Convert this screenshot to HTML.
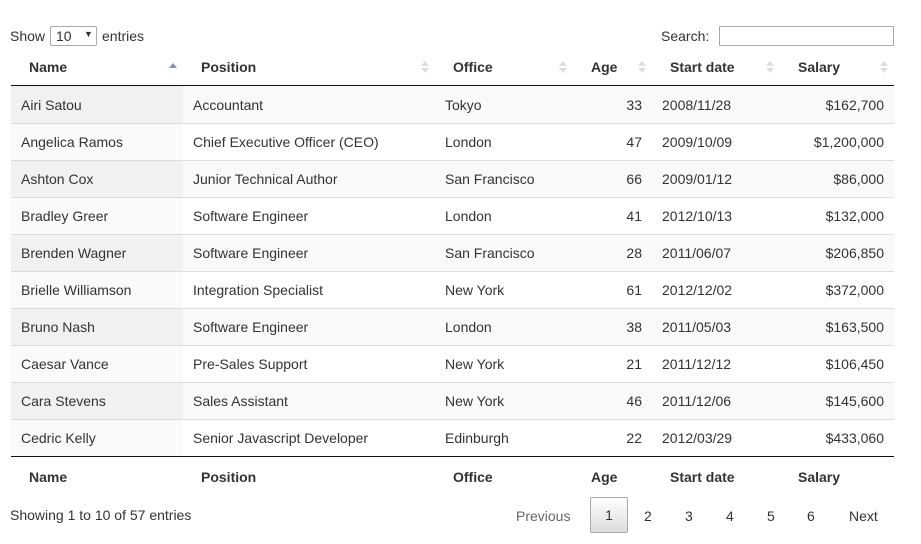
<!DOCTYPE html>
<html><head><style>
body{margin:0;background:#fff;font-family:"Liberation Sans",Arial,sans-serif;font-size:14px;color:#333;width:921px;height:544px;position:relative;overflow:hidden}
.abs{position:absolute}
table{position:absolute;left:11px;top:48px;border-collapse:collapse;table-layout:fixed;width:883px}
th{font-weight:bold;text-align:left;padding:0 18px;height:37px;position:relative}
thead th{border-bottom:1px solid #111}
tfoot th{border-top:1px solid #111;height:40px}
td{padding:0 10px;height:36px;border-top:1px solid #ddd;white-space:nowrap}
tbody tr:first-child td{border-top:none;height:37px}
tbody tr:nth-child(odd) td{background:#f9f9f9}
tbody tr:nth-child(odd) td:first-child{background:#f1f1f1}
tbody tr:nth-child(even) td:first-child{background:#fafafa}
.r{text-align:right}
.s{position:absolute;right:6px;top:12px;width:8px;height:14px}
</style></head><body>
<div class="abs" style="left:10px;top:28px">Show</div>
<div class="abs" style="left:50px;top:26px;width:45px;height:18px;border:1px solid #aaa;border-radius:2px"><span style="position:absolute;left:5px;top:1px">10</span><span style="position:absolute;left:33px;top:2px;font-size:9px">▼</span></div>
<div class="abs" style="left:102px;top:28px">entries</div>
<div class="abs" style="left:661px;top:28px">Search:</div>
<div class="abs" style="left:719px;top:26px;width:173px;height:18px;border:1px solid #aaa"></div>
<table>
<colgroup><col style="width:172px"><col style="width:252px"><col style="width:138px"><col style="width:79px"><col style="width:128px"><col style="width:114px"></colgroup>
<thead><tr>
<th>Name<svg class="s" viewBox="0 0 8 14"><path d="M0 8L4 3L8 8Z" fill="#8888dd"/></svg></th>
<th>Position<svg class="s" viewBox="0 0 8 14"><path d="M0 6L4 1L8 6ZM0 8L4 13L8 8Z" fill="#ddd"/></svg></th>
<th>Office<svg class="s" viewBox="0 0 8 14"><path d="M0 6L4 1L8 6ZM0 8L4 13L8 8Z" fill="#ddd"/></svg></th>
<th>Age<svg class="s" viewBox="0 0 8 14"><path d="M0 6L4 1L8 6ZM0 8L4 13L8 8Z" fill="#ddd"/></svg></th>
<th>Start date<svg class="s" viewBox="0 0 8 14"><path d="M0 6L4 1L8 6ZM0 8L4 13L8 8Z" fill="#ddd"/></svg></th>
<th>Salary<svg class="s" viewBox="0 0 8 14"><path d="M0 6L4 1L8 6ZM0 8L4 13L8 8Z" fill="#ddd"/></svg></th>
</tr></thead>
<tbody>
<tr><td>Airi Satou</td><td>Accountant</td><td>Tokyo</td><td class="r">33</td><td>2008/11/28</td><td class="r">$162,700</td></tr>
<tr><td>Angelica Ramos</td><td>Chief Executive Officer (CEO)</td><td>London</td><td class="r">47</td><td>2009/10/09</td><td class="r">$1,200,000</td></tr>
<tr><td>Ashton Cox</td><td>Junior Technical Author</td><td>San Francisco</td><td class="r">66</td><td>2009/01/12</td><td class="r">$86,000</td></tr>
<tr><td>Bradley Greer</td><td>Software Engineer</td><td>London</td><td class="r">41</td><td>2012/10/13</td><td class="r">$132,000</td></tr>
<tr><td>Brenden Wagner</td><td>Software Engineer</td><td>San Francisco</td><td class="r">28</td><td>2011/06/07</td><td class="r">$206,850</td></tr>
<tr><td>Brielle Williamson</td><td>Integration Specialist</td><td>New York</td><td class="r">61</td><td>2012/12/02</td><td class="r">$372,000</td></tr>
<tr><td>Bruno Nash</td><td>Software Engineer</td><td>London</td><td class="r">38</td><td>2011/05/03</td><td class="r">$163,500</td></tr>
<tr><td>Caesar Vance</td><td>Pre-Sales Support</td><td>New York</td><td class="r">21</td><td>2011/12/12</td><td class="r">$106,450</td></tr>
<tr><td>Cara Stevens</td><td>Sales Assistant</td><td>New York</td><td class="r">46</td><td>2011/12/06</td><td class="r">$145,600</td></tr>
<tr><td>Cedric Kelly</td><td>Senior Javascript Developer</td><td>Edinburgh</td><td class="r">22</td><td>2012/03/29</td><td class="r">$433,060</td></tr>
</tbody>
<tfoot><tr><th>Name</th><th>Position</th><th>Office</th><th>Age</th><th>Start date</th><th>Salary</th></tr></tfoot>
</table>
<div class="abs" style="left:10px;top:507px">Showing 1 to 10 of 57 entries</div>
<div class="abs" style="left:516px;top:508px;color:#666">Previous</div>
<div class="abs" style="left:590px;top:497px;width:36px;height:34px;border:1px solid #aaa;border-radius:2px;background:linear-gradient(#fff,#ddd);text-align:center;line-height:34px">1</div>
<div class="abs" style="left:644px;top:508px">2</div>
<div class="abs" style="left:685px;top:508px">3</div>
<div class="abs" style="left:726px;top:508px">4</div>
<div class="abs" style="left:767px;top:508px">5</div>
<div class="abs" style="left:807px;top:508px">6</div>
<div class="abs" style="left:849px;top:508px">Next</div>
</body></html>
